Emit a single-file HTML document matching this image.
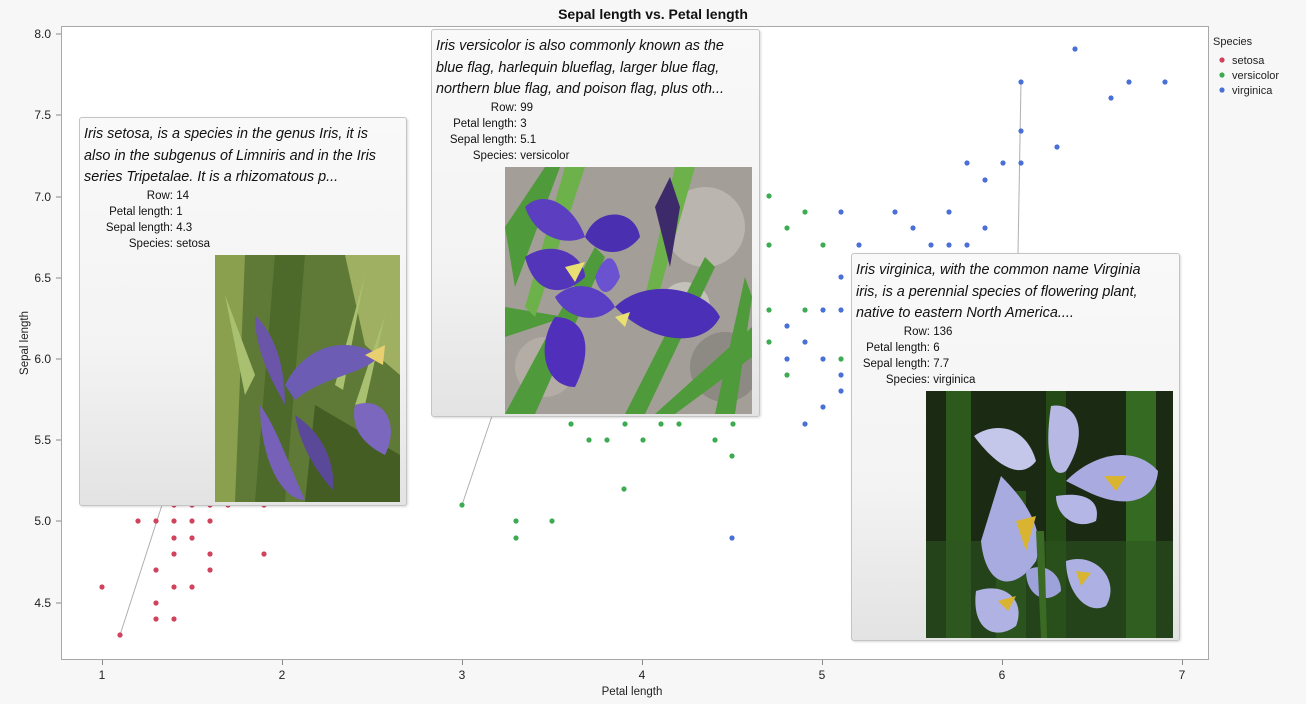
<!DOCTYPE html>
<html><head><meta charset="utf-8"><style>
body{margin:0;width:1306px;height:704px;background:#f7f7f7;font-family:"Liberation Sans",sans-serif;position:relative;overflow:hidden}
.t{position:absolute;font-size:12px;color:#222}
.tip{position:absolute;border:1px solid #c4c4c4;border-radius:3px;background:linear-gradient(#f9f9f9,#f3f3f3 60%,#e3e3e3);box-shadow:1px 1px 2px rgba(0,0,0,.15)}
.desc{position:absolute;left:4px;top:6px;font-style:italic;font-size:14.4px;line-height:21.5px;color:#111;white-space:nowrap}
.kv{position:absolute;font-size:11.5px;line-height:16px;color:#111;white-space:nowrap}
.kv span{display:inline-block;text-align:right}
.img{position:absolute}
</style></head><body>
<div class="t" style="left:0;width:1306px;top:6px;text-align:center;font-weight:bold;font-size:14px;color:#111">Sepal length vs. Petal length</div>
<svg style="position:absolute;left:0;top:0" width="1306" height="704">
<rect x="61.5" y="26.5" width="1147" height="633" fill="#fff" stroke="#a8a8a8"/>
<g stroke="#888">
<line x1="56" x2="61" y1="34" y2="34"/><line x1="56" x2="61" y1="115" y2="115"/><line x1="56" x2="61" y1="197" y2="197"/><line x1="56" x2="61" y1="278" y2="278"/><line x1="56" x2="61" y1="359" y2="359"/><line x1="56" x2="61" y1="440" y2="440"/><line x1="56" x2="61" y1="521" y2="521"/><line x1="56" x2="61" y1="603" y2="603"/>
<line y1="660" y2="665" x1="102.5" x2="102.5"/><line y1="660" y2="665" x1="282.5" x2="282.5"/><line y1="660" y2="665" x1="462.5" x2="462.5"/><line y1="660" y2="665" x1="642.5" x2="642.5"/><line y1="660" y2="665" x1="822.5" x2="822.5"/><line y1="660" y2="665" x1="1002.5" x2="1002.5"/><line y1="660" y2="665" x1="1182.5" x2="1182.5"/>
</g>
<g font-size="12" fill="#222" text-anchor="end">
<text x="51" y="38">8.0</text><text x="51" y="119">7.5</text><text x="51" y="201">7.0</text><text x="51" y="282">6.5</text><text x="51" y="363">6.0</text><text x="51" y="444">5.5</text><text x="51" y="525">5.0</text><text x="51" y="607">4.5</text>
</g>
<g font-size="12" fill="#222" text-anchor="middle">
<text x="102" y="679">1</text><text x="282" y="679">2</text><text x="462" y="679">3</text><text x="642" y="679">4</text><text x="822" y="679">5</text><text x="1002" y="679">6</text><text x="1182" y="679">7</text>
<text x="632" y="695" font-size="11.5">Petal length</text>
<text transform="translate(28,343) rotate(-90)" font-size="11.5">Sepal length</text>
</g>
<g stroke="#b0b0b0" stroke-width="1"><line x1="120" y1="635" x2="162" y2="505"/><line x1="462" y1="505" x2="492" y2="416"/><line x1="1021" y1="82" x2="1018" y2="253"/></g>
<g fill="#d0435c">
<circle cx="174" cy="505" r="2.6"/><circle cx="192" cy="505" r="2.6"/><circle cx="210" cy="505" r="2.6"/><circle cx="228" cy="505" r="2.6"/><circle cx="264" cy="505" r="2.6"/>
<circle cx="138" cy="521" r="2.6"/><circle cx="156" cy="521" r="2.6"/><circle cx="174" cy="521" r="2.6"/><circle cx="192" cy="521" r="2.6"/><circle cx="210" cy="521" r="2.6"/>
<circle cx="174" cy="538" r="2.6"/><circle cx="192" cy="538" r="2.6"/>
<circle cx="174" cy="554" r="2.6"/><circle cx="210" cy="554" r="2.6"/><circle cx="264" cy="554" r="2.6"/>
<circle cx="156" cy="570" r="2.6"/><circle cx="210" cy="570" r="2.6"/>
<circle cx="102" cy="587" r="2.6"/><circle cx="174" cy="587" r="2.6"/><circle cx="192" cy="587" r="2.6"/>
<circle cx="156" cy="603" r="2.6"/><circle cx="156" cy="619" r="2.6"/><circle cx="174" cy="619" r="2.6"/><circle cx="120" cy="635" r="2.6"/>
</g>
<g fill="#3cab52">
<circle cx="462" cy="505" r="2.6"/><circle cx="516" cy="521" r="2.6"/><circle cx="552" cy="521" r="2.6"/><circle cx="516" cy="538" r="2.6"/><circle cx="624" cy="489" r="2.6"/><circle cx="732" cy="456" r="2.6"/>
<circle cx="589" cy="440" r="2.6"/><circle cx="607" cy="440" r="2.6"/><circle cx="643" cy="440" r="2.6"/><circle cx="715" cy="440" r="2.6"/>
<circle cx="571" cy="424" r="2.6"/><circle cx="625" cy="424" r="2.6"/><circle cx="661" cy="424" r="2.6"/><circle cx="679" cy="424" r="2.6"/><circle cx="733" cy="424" r="2.6"/>
<circle cx="769" cy="196" r="2.6"/><circle cx="805" cy="212" r="2.6"/><circle cx="787" cy="228" r="2.6"/><circle cx="769" cy="245" r="2.6"/><circle cx="823" cy="245" r="2.6"/>
<circle cx="769" cy="310" r="2.6"/><circle cx="805" cy="310" r="2.6"/><circle cx="769" cy="342" r="2.6"/><circle cx="841" cy="359" r="2.6"/><circle cx="787" cy="375" r="2.6"/>
</g>
<g fill="#4a6fd6">
<circle cx="732" cy="538" r="2.6"/><circle cx="985" cy="180" r="2.6"/><circle cx="841" cy="212" r="2.6"/><circle cx="895" cy="212" r="2.6"/><circle cx="949" cy="212" r="2.6"/><circle cx="913" cy="228" r="2.6"/><circle cx="985" cy="228" r="2.6"/>
<circle cx="859" cy="245" r="2.6"/><circle cx="931" cy="245" r="2.6"/><circle cx="949" cy="245" r="2.6"/><circle cx="967" cy="245" r="2.6"/>
<circle cx="841" cy="277" r="2.6"/><circle cx="823" cy="310" r="2.6"/><circle cx="841" cy="310" r="2.6"/><circle cx="787" cy="326" r="2.6"/><circle cx="805" cy="342" r="2.6"/>
<circle cx="787" cy="359" r="2.6"/><circle cx="823" cy="359" r="2.6"/><circle cx="841" cy="375" r="2.6"/><circle cx="841" cy="391" r="2.6"/><circle cx="823" cy="407" r="2.6"/><circle cx="805" cy="424" r="2.6"/>
<circle cx="1075" cy="49" r="2.6"/><circle cx="1021" cy="82" r="2.6"/><circle cx="1129" cy="82" r="2.6"/><circle cx="1165" cy="82" r="2.6"/><circle cx="1111" cy="98" r="2.6"/>
<circle cx="1021" cy="131" r="2.6"/><circle cx="1057" cy="147" r="2.6"/><circle cx="967" cy="163" r="2.6"/><circle cx="1003" cy="163" r="2.6"/><circle cx="1021" cy="163" r="2.6"/>
</g>
<text x="1213" y="45" font-size="11" fill="#222">Species</text>
<circle cx="1222" cy="60" r="2.6" fill="#d0435c"/><text x="1232" y="64" font-size="11" fill="#222">setosa</text>
<circle cx="1222" cy="75" r="2.6" fill="#3cab52"/><text x="1232" y="79" font-size="11" fill="#222">versicolor</text>
<circle cx="1222" cy="90" r="2.6" fill="#4a6fd6"/><text x="1232" y="94" font-size="11" fill="#222">virginica</text>
</svg>

<div class="tip" style="left:79px;top:117px;width:326px;height:387px">
<div class="desc">Iris setosa, is a species in the genus Iris, it is<br>also in the subgenus of Limniris and in the Iris<br>series Tripetalae. It is a rhizomatous p...</div>
<div class="kv" style="left:4px;top:70px"><span style="width:89px">Row:</span> 14<br><span style="width:89px">Petal length:</span> 1<br><span style="width:89px">Sepal length:</span> 4.3<br><span style="width:89px">Species:</span> setosa</div>
<svg class="img" style="left:135px;top:137px" width="185" height="247" viewBox="0 0 185 247">
<rect width="185" height="247" fill="#5e7a36"/>
<path d="M0 0L30 0 20 247 0 247Z" fill="#8aa04f"/><path d="M60 0L90 0 70 247 40 247Z" fill="#4d6a2a"/><path d="M130 0L185 0 185 120 150 90Z" fill="#9fb062"/><path d="M100 150L185 200 185 247 90 247Z" fill="#445d22"/>
<path d="M10 40L40 120 30 140Z M150 20L120 130 128 135Z M170 60L140 150 150 150Z" fill="#a8c070"/>
<path d="M40 60C60 80 70 110 70 150 60 130 40 100 40 60Z" fill="#6a55a8"/>
<path d="M70 130C90 90 130 80 165 100 150 120 110 120 80 145Z" fill="#6d5cb4"/>
<path d="M45 150C60 170 70 200 90 245 65 245 45 200 45 150Z" fill="#7660b8"/>
<path d="M80 160C110 180 120 210 118 235 100 215 85 190 80 160Z" fill="#5a4898"/>
<path d="M140 150C170 140 185 170 170 200 150 190 135 175 140 150Z" fill="#7b67bd"/>
<path d="M150 100L170 90 168 110Z" fill="#e8d070"/>
</svg>
</div>

<div class="tip" style="left:431px;top:29px;width:327px;height:386px">
<div class="desc">Iris versicolor is also commonly known as the<br>blue flag, harlequin blueflag, larger blue flag,<br>northern blue flag, and poison flag, plus oth...</div>
<div class="kv" style="left:4px;top:70px"><span style="width:81px">Row:</span> 99<br><span style="width:81px">Petal length:</span> 3<br><span style="width:81px">Sepal length:</span> 5.1<br><span style="width:81px">Species:</span> versicolor</div>
<svg class="img" style="left:73px;top:137px" width="247" height="247" viewBox="0 0 247 247">
<rect width="247" height="247" fill="#a39e98"/>
<circle cx="200" cy="60" r="40" fill="#bab5ae"/><circle cx="220" cy="200" r="35" fill="#8d8983"/><circle cx="40" cy="200" r="30" fill="#b3ada6"/><circle cx="180" cy="140" r="25" fill="#c4c0ba"/>
<path d="M0 60L40 0 55 0 10 120Z M0 247L90 80 100 90 30 247Z M210 247L240 110 247 130 230 247Z M120 247L200 90 210 100 140 247Z M0 140L60 150 0 170Z M150 247L247 160 247 190 170 247Z" fill="#4f9a3a"/>
<path d="M60 0L80 0 30 150 20 140Z M170 0L190 0 150 140 140 130Z" fill="#6cb14a"/>
<path d="M20 40C40 20 70 40 80 70 60 80 30 70 20 40Z" fill="#5b3fc0"/>
<path d="M80 70C90 40 130 40 135 70 120 90 95 90 80 70Z" fill="#4a2fb0"/>
<path d="M20 90C50 70 80 90 80 110 60 130 30 130 20 90Z" fill="#5235b8"/>
<path d="M50 130C70 110 100 120 110 140 90 160 60 150 50 130Z" fill="#5a3ec4"/>
<path d="M110 140C140 110 200 120 215 150 200 180 150 180 110 140Z" fill="#4b2fb6"/>
<path d="M50 150C80 150 90 180 70 220 40 220 30 180 50 150Z" fill="#5030ba"/>
<path d="M90 110C100 85 110 85 115 110 105 130 95 130 90 110Z" fill="#6a52d0"/>
<path d="M150 40L165 10 175 40 165 100Z" fill="#3d2a6a"/>
<path d="M60 100L80 95 70 115Z M110 150L125 145 120 160Z" fill="#e8e070"/>
</svg>
</div>

<div class="tip" style="left:851px;top:253px;width:327px;height:386px">
<div class="desc">Iris virginica, with the common name Virginia<br>iris, is a perennial species of flowering plant,<br>native to eastern North America....</div>
<div class="kv" style="left:4px;top:70px"><span style="width:74px">Row:</span> 136<br><span style="width:74px">Petal length:</span> 6<br><span style="width:74px">Sepal length:</span> 7.7<br><span style="width:74px">Species:</span> virginica</div>
<svg class="img" style="left:74px;top:137px" width="247" height="247" viewBox="0 0 247 247">
<rect width="247" height="247" fill="#1b2a12"/>
<rect x="20" y="0" width="25" height="247" fill="#2d5a1c"/><rect x="120" y="0" width="20" height="247" fill="#244a16"/><rect x="200" y="0" width="30" height="247" fill="#356a22"/><rect x="70" y="100" width="30" height="147" fill="#2a5019"/><rect x="0" y="150" width="247" height="97" fill="#2d5520" opacity=".6"/>
<path d="M48 45C70 30 100 35 110 70 95 90 70 75 48 45Z" fill="#c4c6ea"/>
<path d="M125 15C150 10 165 40 140 80 125 90 118 60 125 15Z" fill="#b7b8e4"/>
<path d="M140 90C170 60 210 55 232 80 230 110 200 120 160 100Z" fill="#a9aae0"/>
<path d="M130 105C160 100 175 110 170 130 150 140 130 125 130 105Z" fill="#b4b6e6"/>
<path d="M75 85C100 110 120 140 110 170 90 200 60 200 55 150 60 110 75 85Z" fill="#a7abe0"/>
<path d="M140 170C170 160 195 190 180 215 160 225 140 200 140 170Z" fill="#adb0e2"/>
<path d="M50 200C80 190 100 210 90 235 70 250 45 240 50 200Z" fill="#b0b2e4"/>
<path d="M100 180C115 170 135 180 135 200 120 215 100 205 100 180Z" fill="#9ea2da"/>
<path d="M90 130L110 125 100 160Z M178 85L200 85 190 100Z M150 180L165 182 155 195Z M72 210L90 205 82 220Z" fill="#d8b430"/>
<path d="M110 140L115 247 121 247 118 140Z" fill="#3a6a24"/>
</svg>
</div>
</body></html>
